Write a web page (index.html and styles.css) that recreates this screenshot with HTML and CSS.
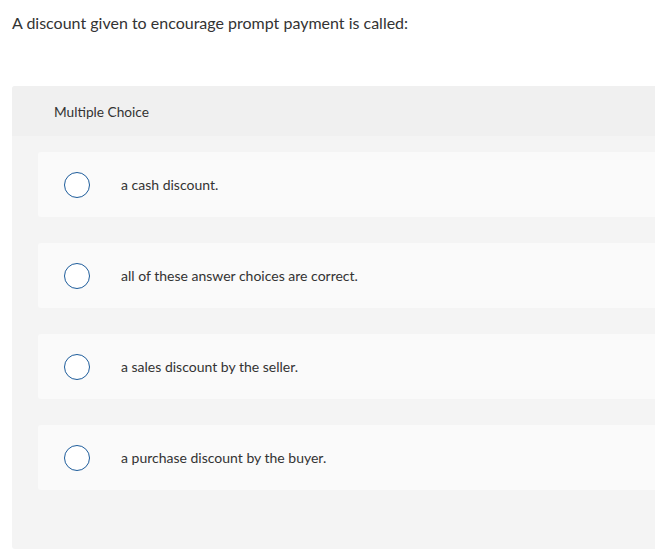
FILE: index.html
```html
<!DOCTYPE html>
<html>
<head>
<meta charset="utf-8">
<link rel="stylesheet" href="styles.css">
</head>
<body>
<p class="question">A discount given to encourage prompt payment is called:</p>
<section class="panel">
  <div class="panel-head">Multiple Choice</div>
  <div class="panel-body">
    <label class="choice"><span class="radio"></span><span class="choice-text">a cash discount.</span></label>
    <label class="choice"><span class="radio"></span><span class="choice-text">all of these answer choices are correct.</span></label>
    <label class="choice"><span class="radio"></span><span class="choice-text">a sales discount by the seller.</span></label>
    <label class="choice"><span class="radio"></span><span class="choice-text">a purchase discount by the buyer.</span></label>
  </div>
</section>
</body>
</html>
```
FILE: styles.css
```css
html { overflow: hidden; }
body {
  margin: 0;
  background: #fff;
  font-family: Lato, "Open Sans", sans-serif;
  color: #333;
}
.question {
  margin: 13px 0 0 12px;
  font-size: 16px;
  line-height: 20px;
}
.panel {
  margin: 53px -30px 0 12px;
  background: #f4f4f4;
  border-radius: 3px;
}
.panel-head {
  height: 50px;
  display: flex;
  align-items: center;
  padding-left: 42px;
  background: #f0f0f0;
  font-size: 13.7px;
  border-radius: 3px 3px 0 0;
}
.panel-body {
  display: flex;
  flex-direction: column;
  gap: 26px;
  padding: 16px 0 59px 26px;
}
.choice {
  height: 65px;
  display: flex;
  align-items: center;
  padding-left: 26px;
  background: #fafafa;
  border-radius: 3px;
}
.radio {
  width: 26px;
  height: 26px;
  box-sizing: border-box;
  border: 1.5px solid #1d5c9b;
  border-radius: 50%;
  background: #fff;
  flex: none;
}
.choice-text {
  margin-left: 31px;
  font-size: 14px;
}
```
